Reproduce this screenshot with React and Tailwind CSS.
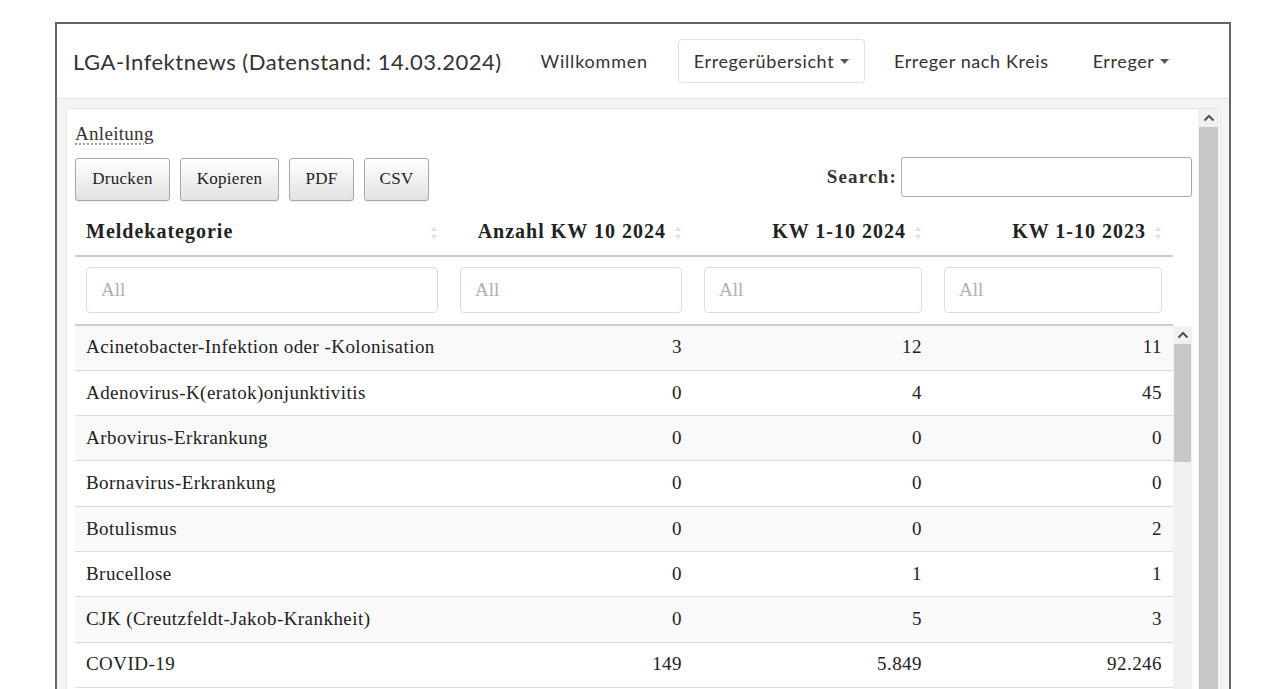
// LGA-Infektnews — Erregerübersicht table view
import React from 'react';

const ROWS = [
  ['Acinetobacter-Infektion oder -Kolonisation', '3', '12', '11'],
  ['Adenovirus-K(eratok)onjunktivitis', '0', '4', '45'],
  ['Arbovirus-Erkrankung', '0', '0', '0'],
  ['Bornavirus-Erkrankung', '0', '0', '0'],
  ['Botulismus', '0', '0', '2'],
  ['Brucellose', '0', '1', '1'],
  ['CJK (Creutzfeldt-Jakob-Krankheit)', '0', '5', '3'],
  ['COVID-19', '149', '5.849', '92.246'],
];

const COLS = [
  { label: 'Meldekategorie', w: 'w-[374px]' },
  { label: 'Anzahl KW 10 2024', w: 'w-[244px]' },
  { label: 'KW 1-10 2024', w: 'w-[240px]' },
  { label: 'KW 1-10 2023', w: 'w-[240px]' },
];

function Caret() {
  return (
    <svg width="9" height="5" viewBox="0 0 9 5" className="ml-[6px] inline-block">
      <path d="M0 0 L9 0 L4.5 5 Z" fill="#555" />
    </svg>
  );
}

function SortIcon() {
  return (
    <svg width="8" height="16" viewBox="0 0 8 16" className="shrink-0">
      <path d="M1 6 L4 2 L7 6 Z" fill="#e0e0e0" />
      <path d="M1 10 L4 14 L7 10 Z" fill="#e0e0e0" />
    </svg>
  );
}

function UpArrow() {
  return (
    <svg width="12" height="8" viewBox="0 0 12 8">
      <path d="M1.5 6.5 L6 2 L10.5 6.5" fill="none" stroke="#505050" strokeWidth="2" />
    </svg>
  );
}

// fake scrollbar column: arrow on top, gray thumb, light track
function ScrollBar({ thumbH, className }) {
  return (
    <div className={`flex flex-col bg-[#f1f1f1] ${className}`}>
      <div className="h-[18px] flex items-center justify-center shrink-0">
        <UpArrow />
      </div>
      <div className="bg-[#c8c8c8] mx-px" style={{ height: thumbH }} />
    </div>
  );
}

function ToolButton({ children, w }) {
  return (
    <button
      className={`${w} h-[43px] rounded-[3px] border border-[#a8a8a8] bg-gradient-to-b from-white to-[#e2e2e2] text-[17px] tracking-[0.3px] text-[#222] shadow-[0_1px_1px_rgba(0,0,0,0.08)]`}
    >
      {children}
    </button>
  );
}

export default function App() {
  const serif = { fontFamily: '"Liberation Serif", Georgia, serif' };

  return (
    <div className="w-[1280px] h-[689px] overflow-hidden bg-white pt-[22px]" style={serif}>
      <div className="ml-[55px] w-[1176px] h-[680px] border-2 border-b-0 border-[#666] flex flex-col">
        {/* --- Navbar --- */}
        <nav
          className="h-[75px] shrink-0 bg-white border-b border-[#e7e7e7] flex items-center text-[#333]"
          style={{ fontFamily: 'Lato, "Open Sans", sans-serif' }}
        >
          <span className="ml-[16px] text-[22px] tracking-[0.5px]">LGA-Infektnews (Datenstand: 14.03.2024)</span>
          <span className="ml-[39px] text-[18px] tracking-[0.8px]">Willkommen</span>
          <span className="ml-[30px] h-[44px] w-[187px] justify-center flex items-center rounded-[4px] border border-[#e2e2e2] text-[18px] tracking-[0.6px]">
            Erregerübersicht
            <Caret />
          </span>
          <span className="ml-[29px] text-[18px] tracking-[0.6px]">Erreger nach Kreis</span>
          <span className="ml-[44px] text-[18px] tracking-[0.6px] flex items-center">
            Erreger
            <Caret />
          </span>
        </nav>

        {/* --- Gray body with panel --- */}
        <div className="flex-1 bg-[#f4f4f4] pt-[9px] pl-[9px] pr-[8px] overflow-hidden">
          <div className="h-full bg-white border border-[#e5e5e5] border-b-0 rounded-t-[4px] flex">
            <div className="flex-1 pl-[8px] pt-[11px] min-w-0">
              {/* Anleitung link */}
              <a className="text-[19px] tracking-[0.3px] text-[#333] underline decoration-dotted decoration-[#999] underline-offset-[4px]">
                Anleitung
              </a>

              {/* Buttons + search */}
              <div className="mt-[9px] flex items-center w-[1117px]">
                <div className="flex gap-[10px]">
                  <ToolButton w="w-[95px]">Drucken</ToolButton>
                  <ToolButton w="w-[99px]">Kopieren</ToolButton>
                  <ToolButton w="w-[65px]">PDF</ToolButton>
                  <ToolButton w="w-[65px]">CSV</ToolButton>
                </div>
                <div className="ml-auto flex items-center -mt-[4px]">
                  <label className="text-[19px] tracking-[1.2px] font-bold text-[#333] mr-[4px]">Search:</label>
                  <input className="w-[291px] h-[40px] border border-[#aaa] rounded-[3px] bg-white outline-none" />
                </div>
              </div>

              {/* Table header */}
              <div className="w-[1098px] mt-[10px]">
                <div className="flex h-[46px] border-b-2 border-[#ccc] items-center">
                  {COLS.map((c, i) => (
                    <div
                      key={c.label}
                      className={`${c.w} flex items-center px-[11px] ${i === 0 ? 'justify-between' : 'justify-end gap-[8px]'}`}
                    >
                      <span className="text-[20px] tracking-[1px] font-bold text-[#222] -mt-[3px]">{c.label}</span>
                      <SortIcon />
                    </div>
                  ))}
                </div>

                {/* Filter inputs */}
                <div className="flex h-[69px] border-b-2 border-[#ccc] items-start pt-[10px]">
                  {COLS.map((c) => (
                    <div key={c.label} className={`${c.w} px-[11px]`}>
                      <input
                        placeholder="All"
                        className="w-full h-[46px] border border-[#dedede] rounded-[4px] px-[14px] text-[19px] placeholder:text-[#b0b0b0] outline-none"
                        style={serif}
                      />
                    </div>
                  ))}
                </div>
              </div>

              {/* Body rows with inner scrollbar */}
              <div className="flex w-[1117px]">
                <div className="w-[1098px]">
                  {ROWS.map((r, ri) => (
                    <div
                      key={r[0]}
                      className={`flex h-[45.3px] items-center border-b border-[#dcdcdc] text-[19px] tracking-[0.45px] text-[#222] ${ri % 2 === 0 ? 'bg-[#f9f9f9]' : 'bg-white'}`}
                    >
                      {r.map((cell, ci) => (
                        <div
                          key={ci}
                          className={`${COLS[ci].w} px-[11px] ${ci === 0 ? 'text-left' : 'text-right'}`}
                        >
                          {cell}
                        </div>
                      ))}
                    </div>
                  ))}
                </div>
                <ScrollBar thumbH={118} className="w-[19px] h-[400px]" />
              </div>
            </div>

            {/* Outer scrollbar */}
            <ScrollBar thumbH={600} className="w-[21px] mr-[1px]" />
          </div>
        </div>
      </div>
    </div>
  );
}
